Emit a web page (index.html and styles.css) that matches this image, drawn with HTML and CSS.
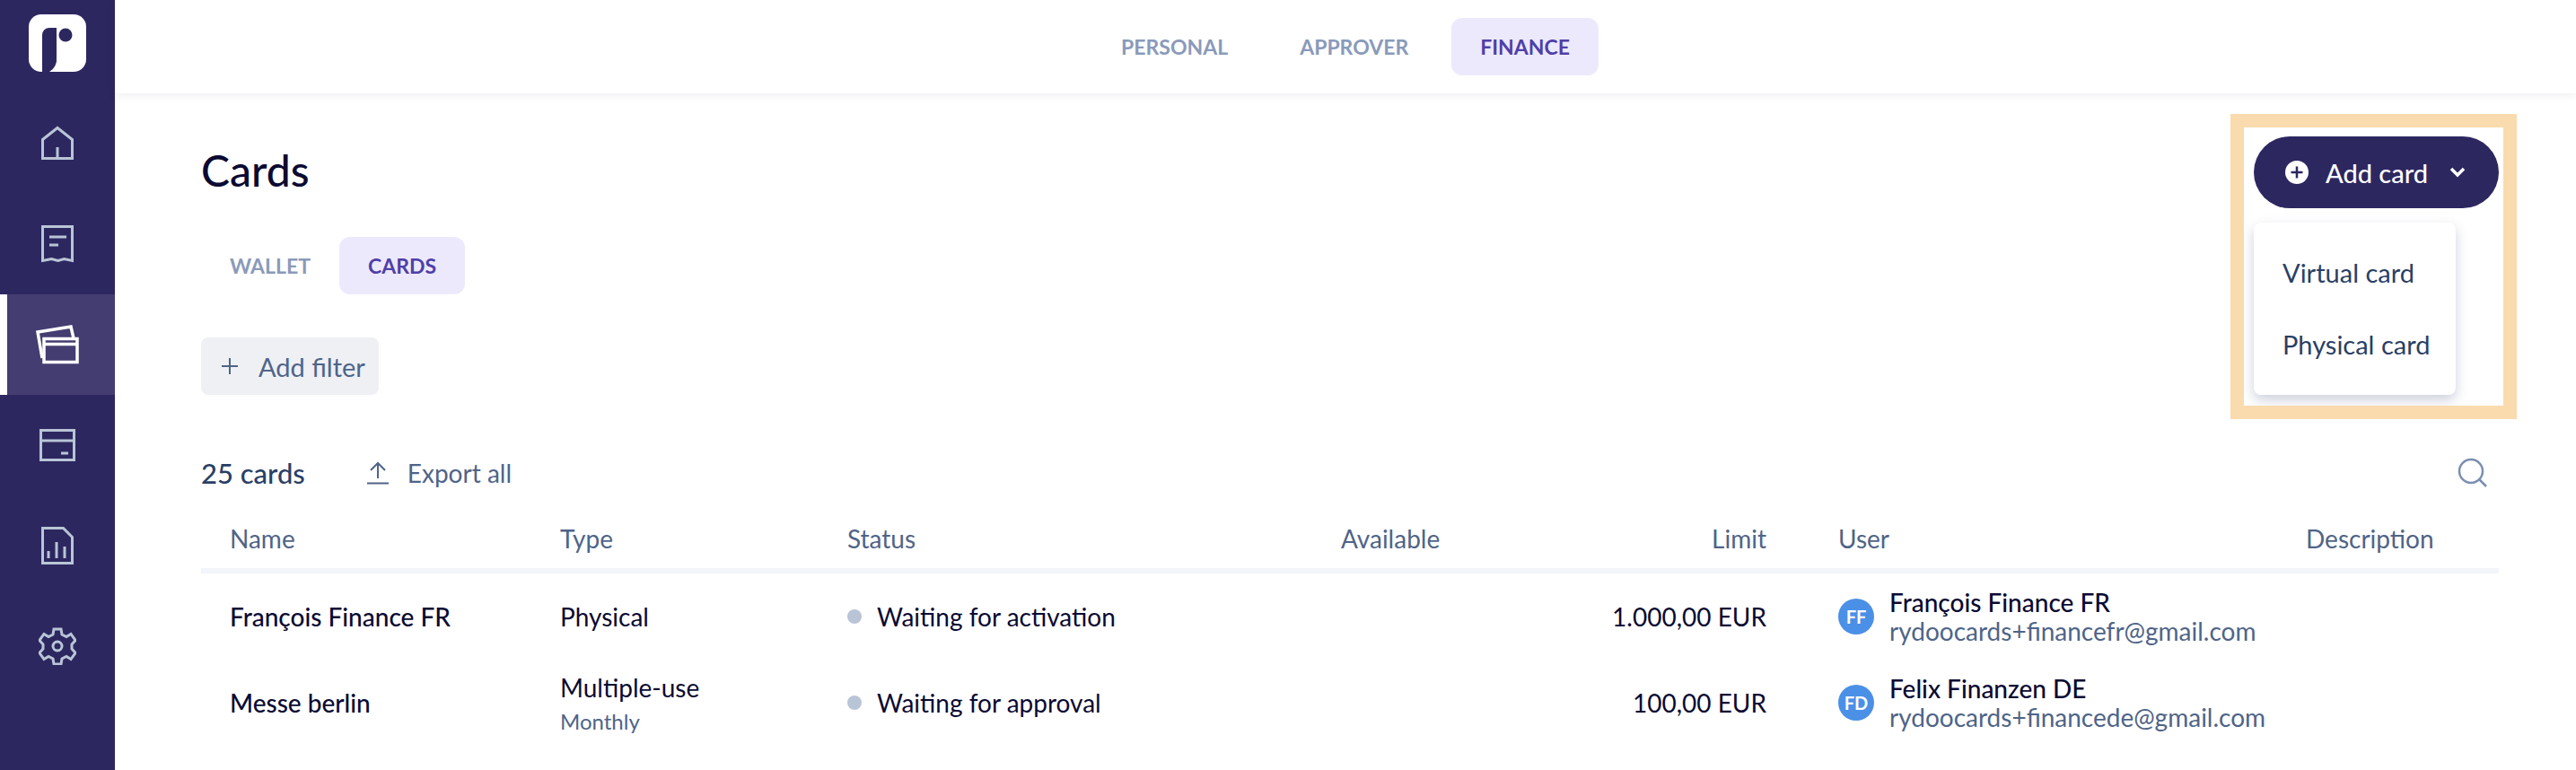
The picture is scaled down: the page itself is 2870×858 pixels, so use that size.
FILE: index.html
```html
<!DOCTYPE html>
<html lang="en">
<head>
    <meta charset="UTF-8">
    <title>Cards</title>
    <link rel="stylesheet" href="styles.css">
</head>
<body>
    <nav class="sidebar">
        <div class="logo">
            <svg width="64" height="64" viewBox="0 0 64 64"><rect width="64" height="64" rx="14" fill="#fff"/><path d="M15 23a8 8 0 0 1 8-8h8v33a0 0 0 0 1 0 0 16 16 0 0 1-8 16h-8z" transform="translate(0 0)" fill="#2d2760"/><circle cx="41" cy="23" r="7.5" fill="#2d2760"/></svg>
        </div>
        <a class="nav-item">
            <svg width="40" height="40" viewBox="0 0 40 40"><path d="M3.5 15.5 20 2.5l16.500 13v21h-33zM20 36.500V24"/></svg>
        </a>
        <a class="nav-item">
            <svg width="40" height="44" viewBox="0 0 40 44"><path d="M3.500 2.500h33v38l-9-2-7 2-7-2-10 2zM11 14h19M11 23h10"/></svg>
        </a>
        <a class="nav-item active">
            <svg width="50" height="46" viewBox="0 0 50 46"><path d="M8 38 3 9 40 3l3 13"/><path d="M10 16.500h37v26H10zM10 22.500h37"/></svg>
        </a>
        <a class="nav-item">
            <svg width="40" height="36" viewBox="0 0 40 36"><path d="M1.500 1.500h37v33h-37zM1.500 13h37M24 27h8"/></svg>
        </a>
        <a class="nav-item">
            <svg width="40" height="42" viewBox="0 0 40 42"><path d="M3.500 1.500h23l10 10v29h-33zM10 35v-8M19 35V17M28 35v-13"/></svg>
        </a>
        <a class="nav-item">
            <svg width="42" height="42" viewBox="0 0 42 42"><path d="M17 2h8l1 6 5 2.500 5-3 5 7-4 4.500v5l4 4.500-5 7-5-3-5 2.500-1 6h-8l-1-6-5-2.500-5 3-5-7 4-4.500v-5L1 14.500l5-7 5 3 5-2.500z"/><circle cx="21" cy="21" r="5"/></svg>
        </a>
    </nav>

    <div class="main">
        <header class="topbar">
            <a class="tab">PERSONAL</a>
            <a class="tab">APPROVER</a>
            <a class="tab selected">FINANCE</a>
        </header>

        <section class="content">
            <div class="title-row">
                <h1>Cards</h1>
                <div class="add-card">
                    <button class="add-btn">
                        <svg width="26" height="26" viewBox="0 0 26 26"><circle cx="13" cy="13" r="13" fill="#fff"/><path d="M13 6.500v13M6.500 13h13" stroke="#2d2760" stroke-width="2.500"/></svg>
                        <span>Add card</span>
                        <svg width="18" height="12" viewBox="0 0 18 12"><path d="M2 2l7 7 7-7" fill="none" stroke="#fff" stroke-width="3.500"/></svg>
                    </button>
                    <div class="dropdown">
                        <div class="dropdown-item">Virtual card</div>
                        <div class="dropdown-item">Physical card</div>
                    </div>
                    <div class="highlight"></div>
                </div>
            </div>

            <div class="subtabs">
                <a class="tab">WALLET</a>
                <a class="tab selected">CARDS</a>
            </div>

            <button class="filter-btn">
                <svg width="18" height="18" viewBox="0 0 18 18"><path d="M9 0v18M0 9h18" fill="none" stroke="#4f6488" stroke-width="2"/></svg>
                <span>Add filter</span>
            </button>

            <div class="count-row">
                <span class="count">25 cards</span>
                <a class="export">
                    <svg width="24" height="26" viewBox="0 0 24 26"><path d="M12 19V2M4 10l8-8 8 8M0 24.500h24" fill="none" stroke="#4f6488" stroke-width="2"/></svg>
                    <span>Export all</span>
                </a>
                <svg class="search" width="34" height="34" viewBox="0 0 34 34"><circle cx="15" cy="15" r="13" fill="none" stroke="#7b8fb0" stroke-width="2.500"/><path d="M24.500 24.500 32 32" stroke="#7b8fb0" stroke-width="2.500"/></svg>
            </div>

            <div class="row head">
                <div>Name</div>
                <div>Type</div>
                <div>Status</div>
                <div>Available</div>
                <div class="right">Limit</div>
                <div class="user-col">User</div>
                <div>Description</div>
            </div>

            <div class="row">
                <div class="name">François Finance FR</div>
                <div>Physical</div>
                <div class="status"><i class="dot"></i>Waiting for activation</div>
                <div></div>
                <div class="right">1.000,00 EUR</div>
                <div class="user-col user">
                    <span class="avatar">FF</span>
                    <div>
                        <div class="user-name">François Finance FR</div>
                        <div class="user-mail">rydoocards+financefr@gmail.com</div>
                    </div>
                </div>
                <div></div>
            </div>

            <div class="row">
                <div class="name">Messe berlin</div>
                <div>Multiple-use<div class="sub">Monthly</div></div>
                <div class="status"><i class="dot"></i>Waiting for approval</div>
                <div></div>
                <div class="right">100,00 EUR</div>
                <div class="user-col user">
                    <span class="avatar">FD</span>
                    <div>
                        <div class="user-name">Felix Finanzen DE</div>
                        <div class="user-mail">rydoocards+financede@gmail.com</div>
                    </div>
                </div>
                <div></div>
            </div>
        </section>
    </div>
</body>
</html>
```

FILE: styles.css
```css
* {
    box-sizing: border-box;
}

body {
    margin: 0;
    height: 858px;
    overflow: hidden;
    display: flex;
    font-family: 'Lato', 'Liberation Sans', sans-serif;
    color: #0b0a33;
    background-color: #fff;
}

.sidebar {
    width: 128px;
    flex-shrink: 0;
    background-color: #2d2760;
    padding-top: 16px;
}

.logo {
    height: 64px;
    margin: 0 32px 24px;
}

.nav-item {
    display: flex;
    justify-content: center;
    align-items: center;
    height: 112px;
}

.nav-item svg {
    fill: none;
    stroke: #b9c5d6;
    stroke-width: 3;
}

.nav-item.active {
    background-color: #433d71;
    border-left: 8px solid #fff;
    padding-right: 8px;
}

.nav-item.active svg {
    stroke: #fff;
    stroke-width: 3.5;
}

.main {
    flex: 1;
    min-width: 0;
}

.topbar {
    height: 104px;
    display: flex;
    justify-content: center;
    align-items: center;
    gap: 16px;
    box-shadow: 0 2px 10px rgba(40, 40, 80, 0.08);
}

.tab {
    display: flex;
    align-items: center;
    height: 64px;
    padding: 0 32px;
    border-radius: 12px;
    font-size: 23px;
    font-weight: 700;
    color: #8a9aba;
}

.tab.selected {
    background-color: #ede9fd;
    color: #4f3fa8;
}

.content {
    padding: 0 86px 0 96px;
}

.title-row {
    display: flex;
    justify-content: space-between;
    height: 160px;
    padding-top: 48px;
}

h1 {
    margin: 0;
    font-size: 48px;
    font-weight: 500;
    line-height: 76px;
}

.add-card {
    position: relative;
}

.add-btn {
    display: flex;
    align-items: center;
    width: 273px;
    height: 80px;
    padding: 0 0 0 35px;
    border: none;
    border-radius: 40px;
    background-color: #2d2760;
    color: #fff;
    font-family: inherit;
    font-size: 29px;
    font-weight: 500;
}

.add-btn span {
    margin: 0 24px 0 19px;
}

.dropdown {
    position: absolute;
    top: 96px;
    left: 0;
    width: 225px;
    height: 192px;
    padding: 16px 0;
    border-radius: 8px;
    background-color: #fff;
    box-shadow: 0 6px 14px rgba(60, 70, 120, 0.25);
}

.dropdown-item {
    height: 80px;
    line-height: 80px;
    padding-left: 32px;
    font-size: 29px;
    color: #2a3f66;
}

.highlight {
    position: absolute;
    top: -25px;
    left: -26px;
    width: 319px;
    height: 340px;
    border: 15px solid #f9dbae;
    pointer-events: none;
}

.subtabs {
    display: flex;
    gap: 0;
}

.filter-btn {
    display: flex;
    align-items: center;
    gap: 23px;
    height: 64px;
    margin-top: 48px;
    padding: 0 15px 0 23px;
    border: none;
    border-radius: 8px;
    background-color: #eef0f4;
    color: #4f6488;
    font-family: inherit;
    font-size: 29px;
}

.count-row {
    display: flex;
    align-items: center;
    height: 62px;
    margin-top: 56px;
}

.count {
    font-size: 31px;
    font-weight: 500;
    color: #2a3f66;
}

.export {
    display: flex;
    align-items: center;
    gap: 21px;
    margin-left: 69px;
    font-size: 28px;
    color: #4f6488;
}

.search {
    margin-left: auto;
    margin-right: 12px;
}

.row {
    display: grid;
    grid-template-columns: 368px 320px 550px 200px 274px 601px 1fr;
    align-items: center;
    height: 96px;
    padding-left: 32px;
    font-size: 28px;
}

.row.head {
    height: 72px;
    padding-top: 0;
    color: #4f6488;
    border-bottom: 6px solid #f2f5fa;
    margin-top: 9px;
}

.name {
    font-weight: 500;
}

.right {
    text-align: right;
}

.sub {
    margin-top: 6px;
    font-size: 24px;
    color: #4f6488;
}

.status {
    display: flex;
    align-items: center;
}

.dot {
    width: 16px;
    height: 16px;
    margin-right: 17px;
    border-radius: 50%;
    background-color: #b9c5d6;
}

.user-col {
    padding-left: 80px;
}

.user {
    display: flex;
    align-items: center;
    gap: 17px;
}

.avatar {
    display: flex;
    justify-content: center;
    align-items: center;
    width: 40px;
    height: 40px;
    flex-shrink: 0;
    border-radius: 50%;
    background-color: #4a90e6;
    color: #fff;
    font-size: 20px;
    font-weight: 700;
}

.user-name {
    font-weight: 500;
    line-height: 32px;
}

.user-mail {
    color: #4f6488;
    line-height: 32px;
}
```
